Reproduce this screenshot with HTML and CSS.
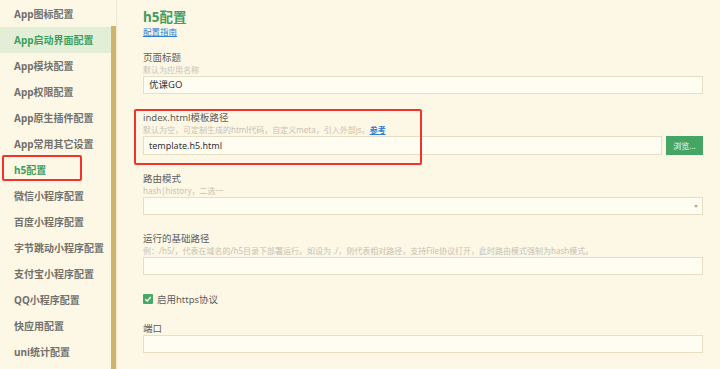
FILE: index.html
```html
<!DOCTYPE html>
<html lang="zh-CN">
<head>
  <meta charset="UTF-8" />
  <title>h5配置</title>
  <link rel="stylesheet" href="styles.css">
</head>
<body>
  <div class="layout">
    <aside class="sidebar">
      <ul class="menu">
        <li>App图标配置</li>
        <li class="active">App启动界面配置</li>
        <li>App模块配置</li>
        <li>App权限配置</li>
        <li>App原生插件配置</li>
        <li>App常用其它设置</li>
        <li class="current">h5配置<span class="mark"></span></li>
        <li>微信小程序配置</li>
        <li>百度小程序配置</li>
        <li>字节跳动小程序配置</li>
        <li>支付宝小程序配置</li>
        <li>QQ小程序配置</li>
        <li>快应用配置</li>
        <li>uni统计配置</li>
      </ul>
      <div class="track"><div class="thumb"></div></div>
    </aside>

    <main class="content">
      <h2 class="title">h5配置</h2>
      <a class="guide" href="#">配置指南</a>

      <div class="field">
        <div class="label">页面标题</div>
        <div class="hint">默认为应用名称</div>
        <div class="input">优课GO</div>
      </div>

      <div class="field marked">
        <div class="label">index.html模板路径</div>
        <div class="hint">默认为空，可定制生成的html代码，自定义meta，引入外部js。<a href="#">参考</a></div>
        <div class="row">
          <div class="input">template.h5.html</div>
          <button class="browse">浏览...</button>
        </div>
        <span class="mark"></span>
      </div>

      <div class="field">
        <div class="label">路由模式</div>
        <div class="hint">hash|history，二选一</div>
        <div class="input select"><span class="arrow"></span></div>
      </div>

      <div class="field">
        <div class="label">运行的基础路径</div>
        <div class="hint">例：/h5/，代表在域名的/h5目录下部署运行。如设为 ./，则代表相对路径，支持File协议打开，此时路由模式强制为hash模式。</div>
        <div class="input"></div>
      </div>

      <label class="check">
        <span class="box">
          <svg width="8" height="8" viewBox="0 0 8 8"><path d="M1.3 4.2 L3.2 6 L6.8 2" fill="none" stroke="#fff" stroke-width="1.3"/></svg>
        </span>
        启用https协议
      </label>

      <div class="field">
        <div class="label">端口</div>
        <div class="input"></div>
      </div>
    </main>
  </div>
</body>
</html>
```

FILE: styles.css
```css
* {
  box-sizing: border-box;
}

html, body {
  margin: 0;
  padding: 0;
  height: 100%;
  overflow: hidden;
  background: #fdf7e6;
  font-family: 'Noto Sans', 'Noto Sans CJK SC', sans-serif;
  color: #555;
}

.layout {
  display: flex;
  height: 369px;
}

/* 左侧菜单 */
.sidebar {
  display: flex;
  width: 117px;
  flex-shrink: 0;
  border-right: 1px solid #efe7cf;
}

.menu {
  list-style: none;
  margin: 0;
  padding: 1px 0 0;
  width: 111px;
}

.menu li {
  position: relative;
  height: 26px;
  line-height: 26px;
  padding-left: 14px;
  font-size: 10px;
  font-weight: bold;
  color: #72716c;
  white-space: nowrap;
}

.menu li.active {
  background: #e3eed6;
  color: #3f9e5f;
}

.menu li.current {
  color: #3f9e5f;
}

.menu .mark {
  position: absolute;
  left: 2px;
  top: -2px;
  width: 80px;
  height: 26px;
  border: 2px solid #f0332c;
  border-radius: 2px;
}

.track {
  width: 5px;
  padding-top: 26px;
}

.thumb {
  height: 100%;
  background: #cfb46c;
}

/* 右侧内容 */
.content {
  flex: 1;
  padding: 8px 17px 0 26px;
}

.title {
  margin: 0;
  font-size: 13.5px;
  line-height: 18px;
  color: #3f9e5f;
}

.guide {
  display: block;
  width: max-content;
  font-size: 8.5px;
  line-height: 12px;
  color: #2d7fd6;
  margin-bottom: 14px;
}

.field {
  margin-bottom: 18px;
}

.field.marked {
  position: relative;
}

.field .mark {
  position: absolute;
  left: -9px;
  top: -3px;
  width: 288px;
  height: 56px;
  border: 2px solid #f0332c;
  border-radius: 2px;
}

.label {
  font-size: 9.5px;
  line-height: 12px;
  color: #5e5d59;
}

.hint {
  font-size: 8px;
  line-height: 12px;
  color: #c8c2b2;
  white-space: nowrap;
}

.hint a {
  color: #2d7fd6;
  font-weight: bold;
}

.input {
  position: relative;
  height: 18px;
  line-height: 16px;
  padding: 0 5px;
  background: #fffcf2;
  border: 1px solid #e8dfc2;
  font-size: 9.5px;
  color: #333;
}

.row {
  display: flex;
  gap: 4px;
}

.row .input {
  flex: 1;
  height: 19px;
  line-height: 17px;
  font-size: 9px;
}

.browse {
  width: 37px;
  height: 19px;
  padding: 0;
  border: none;
  background: #44a565;
  color: #eef7ef;
  font-family: inherit;
  font-size: 8px;
}

.select .arrow {
  position: absolute;
  right: 4px;
  top: 7px;
  border-left: 2.5px solid transparent;
  border-right: 2.5px solid transparent;
  border-top: 3px solid #b8a88a;
}

.check {
  display: flex;
  align-items: center;
  gap: 4px;
  height: 12px;
  margin-bottom: 18px;
  font-size: 9.5px;
  color: #5e5d59;
}

.check .box {
  display: flex;
  align-items: center;
  justify-content: center;
  width: 10px;
  height: 10px;
  background: #49a866;
  border-radius: 1px;
}
```
